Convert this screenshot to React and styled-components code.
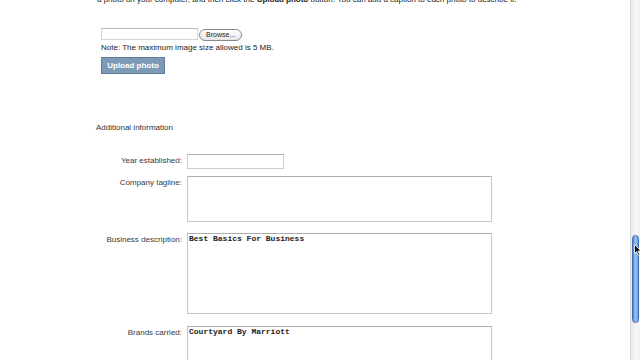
import React from 'react'
import styled, { createGlobalStyle } from 'styled-components'

const Global = createGlobalStyle`
html, body { margin:0; padding:0; background:#fff; }
body { font-family:"Liberation Sans", Arial, sans-serif; color:#222; }
`

function App(){
return(
<>
<Global/>
<Page>
<Content>
<Intro>a photo on your computer, and then click the <b>Upload photo</b> button. You can add a caption to each photo to describe it.</Intro>
<Upload>
<FileRow>
<FileBox/>
<Browse>Browse...</Browse>
</FileRow>
<Note>Note: The maximum image size allowed is 5 MB.</Note>
<UploadButton>Upload photo</UploadButton>
</Upload>
<Section>Additional information</Section>
<Form>
<Row $top={0}>
<Label>Year established:</Label>
<TextInput/>
</Row>
<Row $top={7}>
<Label>Company tagline:</Label>
<Area $h={46}></Area>
</Row>
<Row $top={11}>
<Label>Business description:</Label>
<Area $h={81}>Best Basics For Business</Area>
</Row>
<Row $top={12}>
<Label>Brands carried:</Label>
<Area $h={60}>Courtyard By Marriott</Area>
</Row>
</Form>
</Content>
<Scrollbar>
<Thumb>
<Cursor width="8" height="12" viewBox="0 0 8 12">
<path d="M0.5 0.5 L0.5 9.5 L2.6 7.6 L4.2 11.2 L5.6 10.6 L4 7 L7 7 Z" fill="#111" stroke="#fff" strokeWidth="0.8"/>
</Cursor>
</Thumb>
</Scrollbar>
</Page>
</>
)
}
export default App

const Page=styled.div`
display:flex;
width:640px;
height:360px;
overflow:hidden;
`
const Content=styled.div`
flex:1;
padding-left:97px;
`
const Intro=styled.p`
margin:-5px 0 0 0;
font-size:8px;
line-height:10px;
color:#222;
white-space:nowrap;
b{ font-weight:bold; }
`
const Upload=styled.div`
padding-left:4px;
margin-top:23px;
`
const FileRow=styled.div`
display:flex;
align-items:flex-start;
`
const FileBox=styled.div`
width:97px;
height:12px;
border:1px solid #d4d4d4;
border-top-color:#b8b8b8;
box-sizing:border-box;
`
const Browse=styled.div`
margin-top:1px;
margin-left:1px;
height:12px;
padding:0 6px;
border:1px solid #8a8a8a;
border-radius:7px;
background:linear-gradient(#ffffff,#e6e6e6);
font-size:7px;
line-height:10px;
color:#222;
box-sizing:border-box;
`
const Note=styled.div`
font-size:8px;
line-height:10px;
margin-top:2px;
color:#222;
`
const UploadButton=styled.div`
margin-top:4px;
width:64px;
height:17px;
box-sizing:border-box;
background:#7d9ab6;
border:1px solid #5e7c98;
color:#fff;
font-weight:bold;
font-size:8px;
line-height:15px;
text-align:center;
`
const Section=styled.div`
margin-top:49px;
font-size:8px;
line-height:10px;
color:#333;
margin-left:-1px;
`
const Form=styled.div`
margin-top:21px;
display:flex;
flex-direction:column;
`
const Row=styled.div`
display:grid;
grid-template-columns:85px 1fr;
column-gap:5px;
align-items:start;
margin-top:${p=>p.$top}px;
`
const Label=styled.div`
text-align:right;
font-size:8px;
line-height:10px;
color:#3a3a3a;
padding-top:2px;
`
const TextInput=styled.div`
width:97px;
height:15px;
box-sizing:border-box;
border:1px solid #cccccc;
border-top-color:#b0b0b0;
`
const Area=styled.div`
width:305px;
height:${p=>p.$h}px;
box-sizing:border-box;
border:1px solid #c8c8c8;
border-top-color:#adadad;
font-family:"Liberation Mono","Courier New",monospace;
font-weight:bold;
font-size:8px;
line-height:8px;
color:#222;
padding:1px 1px 0;
`
const Scrollbar=styled.div`
width:9px;
border-left:1px solid #d6d6d6;
background:linear-gradient(90deg,#e9e9e9,#f8f8f8 60%,#f2f2f2);
`
const Thumb=styled.div`
position:relative;
margin:235px 0 0 1px;
width:7px;
height:88px;
box-sizing:border-box;
border:1px solid #3d6cb5;
border-radius:4px;
background:linear-gradient(90deg,#4f86d6,#9ec2f0 50%,#6c9be0);
`
const Cursor=styled.svg`
position:absolute;
left:1px;
top:8px;
`
